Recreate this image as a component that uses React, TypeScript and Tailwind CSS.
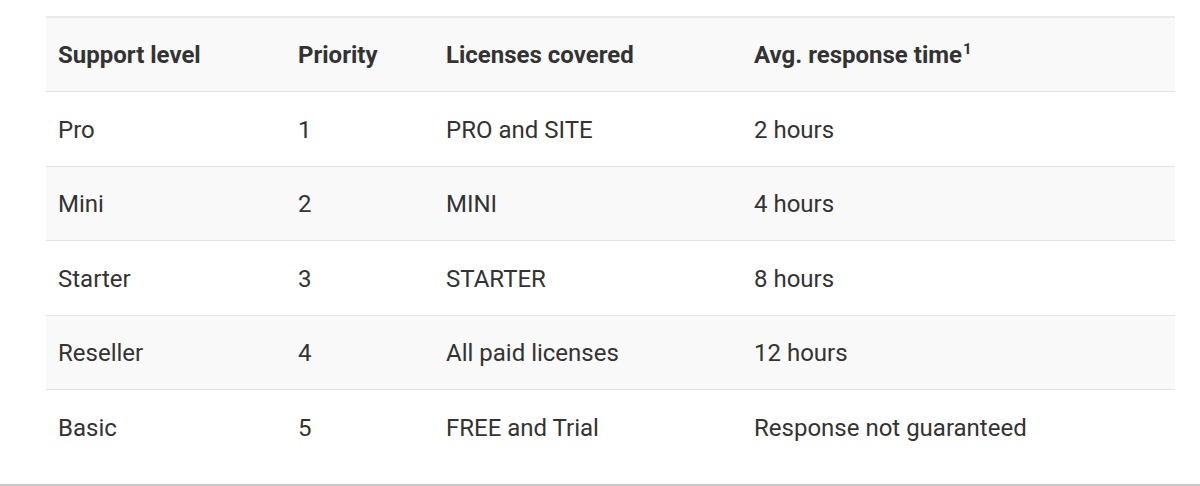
const rows = [
  ['Pro', '1', 'PRO and SITE', '2 hours'],
  ['Mini', '2', 'MINI', '4 hours'],
  ['Starter', '3', 'STARTER', '8 hours'],
  ['Reseller', '4', 'All paid licenses', '12 hours'],
  ['Basic', '5', 'FREE and Trial', 'Response not guaranteed'],
];

const cols = 'grid grid-cols-[240px_148px_308px_1fr]';

export default function App() {
  return (
    <div className="w-[1200px] h-[486px] bg-white flex flex-col font-['Roboto',sans-serif] text-[24px] text-[#333333]">
      <div className="mx-[46px] w-[1129px] mt-4 border-t-2 border-[#ebebeb]">
        <div className={`${cols} h-[74px] items-center bg-[#f9f9f9] border-b border-[#e3e3e3] font-bold`}>
          <div className="px-3">Support level</div>
          <div className="px-3">Priority</div>
          <div className="px-3">Licenses covered</div>
          <div className="px-3">
            Avg. response time<sup className="text-[15px] relative -top-[9px] ml-px">1</sup>
          </div>
        </div>
        {rows.map((r, i) => (
          <div
            key={r[0]}
            className={`${cols} h-[74.5px] items-center ${
              i % 2 === 1 ? 'bg-[#f9f9f9]' : 'bg-white'
            } ${i < rows.length - 1 ? 'border-b border-[#e3e3e3]' : ''}`}
          >
            {r.map((c, j) => (
              <div key={j} className="px-3 pt-0.5">
                {c}
              </div>
            ))}
          </div>
        ))}
      </div>
      <div className="flex-1" />
      <div className="h-[2px] bg-[#c8c8c8]" />
    </div>
  );
}
